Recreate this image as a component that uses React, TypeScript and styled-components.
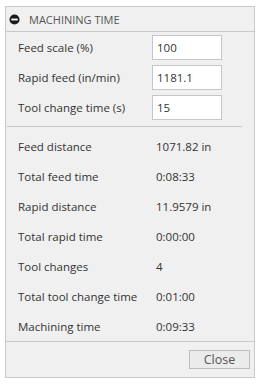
import React from "react";
import styled, { createGlobalStyle } from "styled-components";

const Global = createGlobalStyle`
  html, body { margin: 0; padding: 0; background: #ffffff; }
  body { font-family: "Open Sans", "DejaVu Sans", sans-serif; }
`;

const Page = styled.div`
  padding: 6px 0 0 5px;
`;

const Panel = styled.div`
  width: 248px;
  border: 1px solid #c9c9c9;
  background: #f0f0f0;
  display: flex;
  flex-direction: column;
`;

const Header = styled.div`
  height: 24px;
  display: flex;
  align-items: center;
  gap: 9px;
  padding-left: 3px;
  border-bottom: 1px solid #c9c9c9;
  font-size: 11px;
  color: #555555;
`;

const Icon = styled.svg`
  width: 11px;
  height: 11px;
  flex: none;
`;

const Form = styled.div`
  display: flex;
  flex-direction: column;
  padding: 0 0 4px 0;
`;

const Row = styled.div`
  height: 30px;
  display: grid;
  grid-template-columns: 134px 70px;
  align-items: center;
  padding-left: 12px;
  font-size: 11.5px;
  color: #333333;
`;

const Label = styled.span`
  white-space: nowrap;
`;

const Input = styled.input`
  box-sizing: border-box;
  width: 70px;
  height: 25px;
  border: 1px solid #c6c6c6;
  background: #ffffff;
  padding: 0 0 0 4px;
  font: inherit;
  font-size: 11.5px;
  color: #333333;
  outline: none;
`;

const Divider = styled.div`
  height: 1px;
  background: #c9c9c9;
  margin: 0 12px 4px 1px;
`;

const Value = styled.span`
  padding-left: 4px;
  white-space: nowrap;
`;

const Footer = styled.div`
  border-top: 1px solid #c9c9c9;
  height: 35px;
  display: flex;
  align-items: center;
  justify-content: flex-end;
  padding-right: 4px;
`;

const Button = styled.button`
  box-sizing: border-box;
  width: 61px;
  height: 19px;
  border: 1px solid #bdbdbd;
  background: #ebebeb;
  font-family: inherit;
  font-size: 12.5px;
  color: #555555;
  padding: 0;
`;

const inputs = [
  ["Feed scale (%)", "100"],
  ["Rapid feed (in/min)", "1181.1"],
  ["Tool change time (s)", "15"],
];

const stats = [
  ["Feed distance", "1071.82 in"],
  ["Total feed time", "0:08:33"],
  ["Rapid distance", "11.9579 in"],
  ["Total rapid time", "0:00:00"],
  ["Tool changes", "4"],
  ["Total tool change time", "0:01:00"],
  ["Machining time", "0:09:33"],
];

export default function App() {
  return (
    <Page>
      <Global />
      <Panel>
        <Header>
          <Icon viewBox="0 0 12 12">
            <circle cx="6" cy="6" r="5.5" fill="#1a1a1a" />
            <rect x="2.5" y="5" width="7" height="2" fill="#ffffff" />
          </Icon>
          MACHINING TIME
        </Header>
        <Form>
          {inputs.map(([l, v]) => (
            <Row key={l}>
              <Label>{l}</Label>
              <Input defaultValue={v} />
            </Row>
          ))}
        </Form>
        <Divider />
        {stats.map(([l, v]) => (
          <Row key={l}>
            <Label>{l}</Label>
            <Value>{v}</Value>
          </Row>
        ))}
        <Footer>
          <Button>Close</Button>
        </Footer>
      </Panel>
    </Page>
  );
}
